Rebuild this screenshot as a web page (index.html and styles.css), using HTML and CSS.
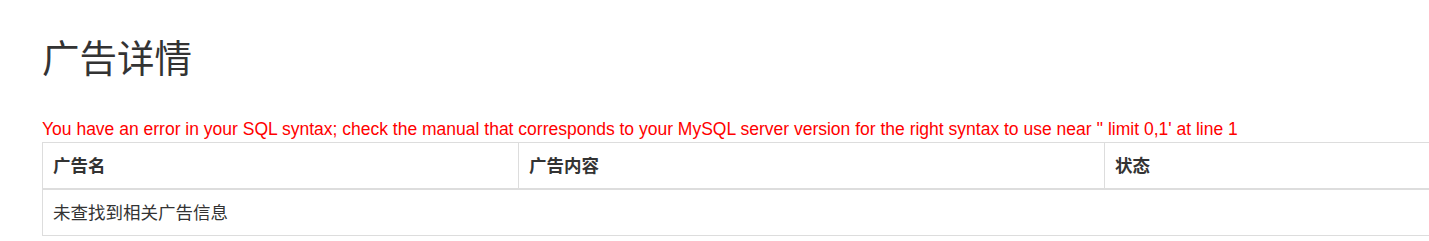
FILE: index.html
```html
<!DOCTYPE html>
<html lang="zh-CN">
<head>
<meta charset="utf-8">
<title>广告详情</title>
<link rel="stylesheet" href="styles.css">
</head>
<body>
<div class="page">
  <h1 class="title">广告详情</h1>
  <div class="error">You have an error in your SQL syntax; check the manual that corresponds to your MySQL server version for the right syntax to use near '' limit 0,1' at line 1</div>
  <table class="ad-table">
    <colgroup>
      <col class="c1">
      <col class="c2">
      <col class="c3">
    </colgroup>
    <thead>
      <tr><th>广告名</th><th>广告内容</th><th>状态</th></tr>
    </thead>
    <tbody>
      <tr><td colspan="3">未查找到相关广告信息</td></tr>
    </tbody>
  </table>
</div>
</body>
</html>
```

FILE: styles.css
```css
html, body {
  margin: 0;
  padding: 0;
  overflow: hidden;
  background: #fff;
}
body {
  font-family: "Liberation Sans", "Noto Sans CJK SC", Arial, sans-serif;
  font-size: 17.5px;
  line-height: 25px;
  color: #333;
}
.page {
  padding: 35px 0 0 42px;
}
.title {
  margin: 0 0 41px 0;
  font-family: "Noto Sans CJK SC", sans-serif;
  font-size: 37.5px;
  font-weight: 400;
  line-height: 41px;
  color: #333;
}
.error {
  font-size: 17.5px;
  line-height: 25px;
  color: #ff0000;
}
.ad-table {
  width: 1420px;
  table-layout: fixed;
  border-collapse: collapse;
  border: 1px solid #ddd;
}
.c1 { width: 476px; }
.c2 { width: 586px; }
.ad-table th,
.ad-table td {
  padding: 9px 10px 11px;
  line-height: 25px;
  text-align: left;
  border: 1px solid #ddd;
  font-family: "Noto Sans CJK SC", sans-serif;
  font-size: 17.5px;
  vertical-align: middle;
}
.ad-table th {
  font-weight: 700;
  border-bottom: 2px solid #ddd;
}
```
